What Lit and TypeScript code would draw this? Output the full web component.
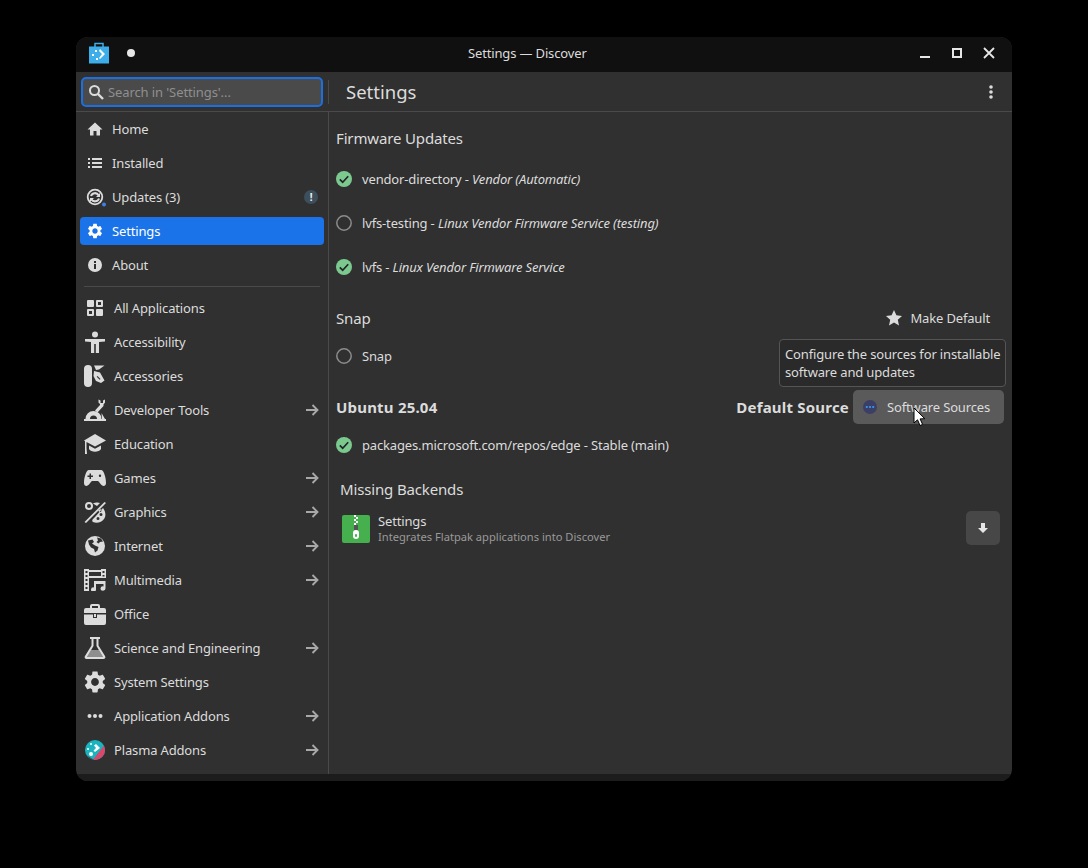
import { LitElement, css, html, svg } from "lit";
import { customElement } from "lit/decorators.js";

const GEAR =
  "M19.14 12.94c.04-.3.06-.61.06-.94 0-.32-.02-.64-.07-.94l2.03-1.58c.18-.14.23-.41.12-.61l-1.92-3.32c-.12-.22-.37-.29-.59-.22l-2.39.96c-.5-.38-1.03-.7-1.62-.94l-.36-2.54c-.04-.24-.24-.41-.48-.41h-3.84c-.24 0-.43.17-.47.41l-.36 2.54c-.59.24-1.13.57-1.62.94l-2.39-.96c-.22-.08-.47 0-.59.22L2.74 8.87c-.12.21-.08.47.12.61l2.03 1.58c-.05.3-.09.63-.09.94s.02.64.07.94l-2.03 1.58c-.18.14-.23.41-.12.61l1.92 3.32c.12.22.37.29.59.22l2.39-.96c.5.38 1.03.7 1.62.94l.36 2.54c.05.24.24.41.48.41h3.84c.24 0 .44-.17.47-.41l.36-2.54c.59-.24 1.13-.56 1.62-.94l2.39.96c.22.08.47 0 .59-.22l1.92-3.32c.12-.22.07-.47-.12-.61l-2.01-1.58zM12 15.6c-1.98 0-3.6-1.62-3.6-3.6s1.62-3.6 3.6-3.6 3.6 1.62 3.6 3.6-1.62 3.6-3.6 3.6z";

const small = {
  home: html`<svg viewBox="0 0 16 16" width="16" height="16"><path fill="currentColor" d="M8 1.500 15.500 8.500H13V14.500H9.500V10h-3v4.500H3V8.500H.5z"/></svg>`,
  list: html`<svg viewBox="0 0 16 16" width="16" height="16"><path fill="currentColor" d="M1 3h2v2H1zM5 3h10v2H5zM1 7h2v2H1zM5 7h10v2H5zM1 11h2v2H1zM5 11h10v2H5z"/></svg>`,
  updates: html`<svg viewBox="0 0 22 22" width="22" height="22" style="margin:0 -3px"><circle cx="11" cy="11" r="7.300" fill="none" stroke="currentColor" stroke-width="1.800"/><path fill="none" stroke="currentColor" stroke-width="2" d="M7 10a4.200 4.200 0 0 1 7.600-.8M15 12.500a4.200 4.200 0 0 1-7.600.8"/><path fill="currentColor" d="M16 7v4h-4zM6 16v-4h4z"/><circle cx="20" cy="18.500" r="2" fill="#3f7fe8"/></svg>`,
  gear: html`<svg viewBox="0 0 24 24" width="18" height="18" style="margin:-1px"><path fill="currentColor" d="${GEAR}"/></svg>`,
  about: html`<svg viewBox="0 0 16 16" width="16" height="16"><path fill="currentColor" fill-rule="evenodd" d="M8 1a7 7 0 1 1 0 14A7 7 0 0 1 8 1zM7 4v2h2V4zM7 7v5h2V7z"/></svg>`,
};

const big = {
  apps: svg`<path fill="currentColor" fill-rule="evenodd" d="M4 3h5a1 1 0 0 1 1 1v5a1 1 0 0 1-1 1H4a1 1 0 0 1-1-1V4a1 1 0 0 1 1-1zM13 3h5a1 1 0 0 1 1 1v5a1 1 0 0 1-1 1h-5a1 1 0 0 1-1-1V4a1 1 0 0 1 1-1zm1 2v3h3V5zM4 12h5a1 1 0 0 1 1 1v5a1 1 0 0 1-1 1H4a1 1 0 0 1-1-1v-5a1 1 0 0 1 1-1zm1 2v3h3v-3zM13 12h5a1 1 0 0 1 1 1v5a1 1 0 0 1-1 1h-5a1 1 0 0 1-1-1v-5a1 1 0 0 1 1-1z"/>`,
  access: svg`<circle cx="11" cy="3.500" r="3" fill="currentColor"/><path fill="currentColor" d="M1 8h20v2.500l-6 .5V22h-3.200v-9h-1.600v9H7V11l-6-.5z"/>`,
  accessories: svg`<rect x="0" y="0" width="8" height="22" rx="4" fill="currentColor"/><path fill="currentColor" d="M10 .5h10.500L15 4.500l-3 .5z"/><path fill="currentColor" fill-rule="evenodd" d="M10 6l6 1.500 4.500 8-3.500 2.500-5-2-2.500-5zM13.500 11l-.8.8 3 3 .8-.8z"/>`,
  dev: svg`<path fill="currentColor" fill-rule="evenodd" d="M0 20h22v2H0zM1.500 20a8 8 0 0 1 16 0h-4.500a3.500 3.500 0 0 0-7 0z"/><path fill="currentColor" d="M17.500 14 21 20h-3zM11 11.500l5-5.500v-1L14.500 3.500V.5l2 1V4h2.500V1.500l2-1V3.500L19.500 5.500v1.500l-6 6.500z"/>`,
  edu: svg`<path fill="currentColor" d="M11 1 22 7.500 11 13.500 2.500 9V15l.5 6H1V8.200L0 7.500zM5 12.500l6 3.300 6-3.300V16c-2 3.500-10 3.500-12 0z"/>`,
  games: svg`<path fill="currentColor" fill-rule="evenodd" d="M5 3h12c3 0 5 8 5 13 0 2-1 3-2.500 3-2 0-4-4-5.500-5H8c-1.500 1-3.500 5-5.500 5C1 19 0 18 0 16 0 11 2 3 5 3zM5.500 6.500V8.500h-2V10h2v2H7v-2h2V8.500H7v-2zM16 7.500a1.200 1.200 0 1 0 0 2.400 1.200 1.200 0 0 0 0-2.400z"/>`,
  graphics: svg`<path fill="currentColor" fill-rule="evenodd" d="M20.500 1 22 2 2 22l-1.500-1zM5 1a4 4 0 1 1 0 8 4 4 0 0 1 0-8zm0 2a2 2 0 1 0 0 4 2 2 0 0 0 0-4zM9 2.500C11 1.500 14 1 16 2L13 5zM19 7c3 4 3 8 1 11s-7 5-11 3c-1-.5-1-2 0-3l2-2zM14 16a1.500 1.500 0 1 0 0 3 1.500 1.500 0 0 0 0-3zM17 12a1.500 1.500 0 1 0 0 3 1.500 1.500 0 0 0 0-3zM16 8a1.500 1.500 0 1 0 0 3 1.500 1.500 0 0 0 0-3z"/>`,
  internet: svg`<circle cx="11" cy="11" r="10" fill="currentColor"/><path fill="#303030" d="M4 5.500 8.500 4.500 10 7 8 8.500l3 2 3.500 1.500-1 3.500-2.500 2-1-3.500-3-1.500-2-3zM13 2.500l4 1 2 3-3 .5-1.500 1.500-2-1.500 1.500-1.500z"/>`,
  multi: svg`<path fill="currentColor" fill-rule="evenodd" d="M0 0h5v22H0zM1.500 2v2h2V2zM1.500 6v2h2V6zM1.500 10v2h2v-2zM1.500 14v2h2v-2zM1.500 18v2h2v-2zM17 0h5v9h-5zM18.500 2v2h2V2zM18.500 6v1.500h2V6z"/><path fill="currentColor" d="M5 1h12v2H5zM5 7h12v2H5zM10 12h11.500v7.500a2.500 2.200 0 1 1-2-2.100V15h-7.500v5.500a2.500 2.200 0 1 1-2-2.100z"/>`,
  office: svg`<path fill="currentColor" fill-rule="evenodd" d="M6 5V3a2 2 0 0 1 2-2h6a2 2 0 0 1 2 2v2h4a2 2 0 0 1 2 2v3H0V7a2 2 0 0 1 2-2zm2 0h6V3H8zM0 11.500h9V15h4v-3.500h9V20a2 2 0 0 1-2 2H2a2 2 0 0 1-2-2zM10 11h2v3h-2z"/>`,
  science: svg`<path fill="currentColor" fill-rule="evenodd" d="M6 0h10v2h-1.500v6.500L21 19c1 1.500 0 3-1.500 3h-17C1 22 0 20.500 1 19L7.500 8.500V2H6zm3.500 2v7L3 20h16L12.500 9V2z"/><path fill="currentColor" opacity=".55" d="M7 13h8l4 7H3z"/>`,
  system: svg`<svg x="-2" y="-2" width="26" height="26" viewBox="0 0 24 24"><path fill="currentColor" d="${GEAR}"/></svg>`,
  addons: svg`<circle cx="5.500" cy="11" r="2" fill="currentColor"/><circle cx="11" cy="11" r="2" fill="currentColor"/><circle cx="16.500" cy="11" r="2" fill="currentColor"/>`,
  plasma: svg`<defs><clipPath id="pc"><circle cx="11" cy="11" r="10"/></clipPath></defs><g clip-path="url(#pc)"><rect width="22" height="22" fill="#1bb3bd"/><path fill="#d9476a" d="M22 4v18H8z"/><path fill="#3c4a52" d="M0 14 8 22H0zM2 16l6 6h4z"/><path fill="#fff" d="M12 5l4 4-5 4-1.500-1.500L12 9l-2-2.500z"/><circle cx="7" cy="5" r="1" fill="#fff"/><circle cx="4" cy="10" r="1" fill="#fff"/><circle cx="7" cy="15" r="2" fill="#fff"/></g>`,
};

const topItems = [
  { label: "Home", icon: small.home },
  { label: "Installed", icon: small.list },
  { label: "Updates (3)", icon: small.updates, badge: true },
  { label: "Settings", icon: small.gear, active: true },
  { label: "About", icon: small.about },
];

const categories = [
  { label: "All Applications", icon: big.apps },
  { label: "Accessibility", icon: big.access },
  { label: "Accessories", icon: big.accessories },
  { label: "Developer Tools", icon: big.dev, more: true },
  { label: "Education", icon: big.edu },
  { label: "Games", icon: big.games, more: true },
  { label: "Graphics", icon: big.graphics, more: true },
  { label: "Internet", icon: big.internet, more: true },
  { label: "Multimedia", icon: big.multi, more: true },
  { label: "Office", icon: big.office },
  { label: "Science and Engineering", icon: big.science, more: true },
  { label: "System Settings", icon: big.system },
  { label: "Application Addons", icon: big.addons, more: true },
  { label: "Plasma Addons", icon: big.plasma, more: true },
];

const check = html`<svg viewBox="0 0 16 16" width="16" height="16"><circle cx="8" cy="8" r="8" fill="#7cc98f"/><path fill="none" stroke="#232629" stroke-width="1.700" d="M3.800 8.300 6.700 11.200 12.200 5.200"/></svg>`;
const radio = html`<svg viewBox="0 0 16 16" width="16" height="16"><circle cx="8" cy="8" r="7.200" fill="none" stroke="#8c8c8c" stroke-width="1.500"/></svg>`;
const arrow = html`<svg class="arrow" viewBox="0 0 14 12" width="14" height="12"><path fill="none" stroke="currentColor" stroke-width="1.900" d="M1 6h11.500M7.500 1l5 5-5 5"/></svg>`;

@customElement("app-root")
export class AppRoot extends LitElement {
  static styles = css`
    :host {
      display: block;
      height: 868px;
      background: #000;
      font-family: "Noto Sans", sans-serif;
      font-size: 13px;
      letter-spacing: -0.15px;
      color: #dcdcdc;
    }
    .page {
      padding: 37px 76px;
    }
    .window {
      position: relative;
      width: 936px;
      height: 744px;
      background: #303030;
      border-radius: 12px;
      overflow: hidden;
      display: flex;
      flex-direction: column;
    }
    .titlebar {
      height: 35px;
      box-sizing: border-box;
      flex: none;
      background: #101010;
      display: grid;
      grid-template-columns: 380px auto 1fr;
      align-items: center;
      padding: 0 17px 3px 12px;
    }
    .title-left {
      display: flex;
      align-items: center;
      gap: 17px;
    }
    .dot {
      width: 8px;
      height: 8px;
      border-radius: 50%;
      background: #e6e6e6;
    }
    .title-right {
      display: flex;
      justify-content: flex-end;
      gap: 20px;
      color: #e6e6e6;
    }
    .toolbar {
      height: 39px;
      flex: none;
      display: flex;
      align-items: center;
      border-bottom: 1px solid #4a4a4a;
      padding: 0 19px 0 5px;
    }
    .search {
      box-sizing: border-box;
      width: 242px;
      height: 30px;
      background: #4a4a4a;
      border: 2px solid #1b6fe0;
      border-radius: 5px;
      display: flex;
      align-items: center;
      gap: 4px;
      padding: 0 5px;
      color: #8f8f8f;
      letter-spacing: -0.1px;
      white-space: nowrap;
    }
    .search svg {
      color: #dcdcdc;
    }
    .tool-sep {
      width: 1px;
      height: 24px;
      background: #4a4a4a;
      margin: 0 17px 0 5px;
    }
    .page-title {
      font-size: 18.5px;
      letter-spacing: 0;
      flex: 1;
    }
    .body {
      flex: 1;
      display: flex;
      min-height: 0;
    }
    .sidebar {
      border-right: 1px solid #4a4a4a;
      padding: 3px 4px 0;
      width: 244px;
      flex: none;
      display: flex;
      flex-direction: column;
      gap: 6px;
    }
    .item {
      height: 28px;
      display: flex;
      align-items: center;
      border-radius: 4px;
      padding: 0 5px 0 4px;
      gap: 8px;
      white-space: nowrap;
    }
    .item.top {
      padding-left: 7px;
      padding-right: 6px;
      gap: 9px;
    }
    .item.active {
      background: #1a73e8;
      color: #fff;
    }
    .icon {
      width: 22px;
      height: 22px;
      flex: none;
    }
    .item .label {
      flex: 1;
    }
    .arrow {
      color: #a8a8a8;
    }
    .badge {
      width: 14px;
      height: 14px;
      border-radius: 50%;
      background: #3d4f5c;
      color: #eee;
      font-size: 10px;
      font-weight: 700;
      line-height: 14px;
      text-align: center;
    }
    .side-sep {
      height: 1px;
      background: #4a4a4a;
      margin: 1px 4px;
    }
    .content {
      position: relative;
      flex: 1;
      padding: 12px 8px 0 7px;
    }
    .heading {
      font-size: 15px;
      line-height: 28px;
      height: 30px;
    }
    .heading.low {
      line-height: 30px;
    }
    .row {
      height: 44px;
      display: flex;
      align-items: center;
      gap: 10px;
    }
    .row.first {
      margin-top: 3px;
    }
    .row.snap {
      margin-top: 2px;
    }
    .row em {
      font-style: italic;
    }
    .snap-head {
      margin-top: 15px;
      height: 28px;
      display: flex;
      align-items: center;
      justify-content: space-between;
      padding-right: 14px;
    }
    .flat {
      display: flex;
      align-items: center;
      gap: 8px;
    }
    .source-head {
      margin-top: 12px;
      height: 34px;
      display: flex;
      align-items: center;
      gap: 4px;
      font-weight: 700;
      font-size: 15px;
      letter-spacing: 0.2px;
    }
    .source-head .name {
      flex: 1;
    }
    .button {
      width: 151px;
      height: 34px;
      box-sizing: border-box;
      background: #5a5a5a;
      border-radius: 5px;
      display: flex;
      align-items: center;
      gap: 10px;
      padding-left: 10px;
      font-weight: 400;
      font-size: 13px;
      letter-spacing: -0.15px;
    }
    .row.tight {
      height: 42px;
    }
    .missing {
      margin-top: 8px;
      padding-left: 4px;
    }
    .backend {
      margin-top: 7px;
      height: 34px;
      display: flex;
      align-items: center;
      gap: 8px;
      padding: 0 4px 0 6px;
    }
    .backend .pack {
      margin-top: 2px;
    }
    .backend .text {
      flex: 1;
      line-height: 16px;
      padding-top: 2px;
    }
    .sub {
      font-size: 11.15px;
      letter-spacing: 0;
      color: #9a9a9a;
    }
    .square {
      width: 34px;
      height: 34px;
      background: #474747;
      border-radius: 5px;
      display: grid;
      place-items: center;
    }
    .tooltip {
      position: absolute;
      left: 450px;
      top: 227px;
      width: 227px;
      height: 48px;
      box-sizing: border-box;
      background: #2a2a2a;
      border: 1px solid #555;
      border-radius: 4px;
      padding: 5px;
      line-height: 18px;
      white-space: nowrap;
    }
    .cursor {
      position: absolute;
      left: 837px;
      top: 370px;
    }
    .footer {
      height: 7px;
      flex: none;
      background: #1c1c1c;
    }
  `;

  render() {
    return html`
      <div class="page">
        <div class="window">
          <div class="titlebar">
            <div class="title-left">
              <svg viewBox="0 0 22 22" width="22" height="22">
                <path fill="none" stroke="#3daee9" stroke-width="1.500" d="M7 5V1.500h8V5" />
                <rect x="1" y="4.500" width="20" height="17" fill="#3daee9" />
                <path fill="#fff" d="M12 7l5 5-5 5-1-1 3-4-3-3zM7 8h2v2H7zM4 12h2v2H4zM8 16h2v2H8z" />
              </svg>
              <span class="dot"></span>
            </div>
            <div>Settings — Discover</div>
            <div class="title-right">
              <svg viewBox="0 0 12 12" width="12" height="12"><path fill="currentColor" d="M1 9h10v2H1z" /></svg>
              <svg viewBox="0 0 12 12" width="12" height="12"><path fill="none" stroke="currentColor" stroke-width="2" d="M2 2h8v8H2z" /></svg>
              <svg viewBox="0 0 12 12" width="12" height="12"><path fill="none" stroke="currentColor" stroke-width="1.800" d="M1 1l10 10M11 1 1 11" /></svg>
            </div>
          </div>
          <div class="toolbar">
            <div class="search">
              <svg viewBox="0 0 16 16" width="16" height="16"><circle cx="6.500" cy="6.500" r="4.500" fill="none" stroke="currentColor" stroke-width="2" /><path stroke="currentColor" stroke-width="2.400" d="M10 10l5 5" /></svg>
              <span>Search in 'Settings'...</span>
            </div>
            <div class="tool-sep"></div>
            <div class="page-title">Settings</div>
            <svg viewBox="0 0 4 16" width="4" height="16"><circle cx="2" cy="3" r="1.800" fill="#dcdcdc" /><circle cx="2" cy="8" r="1.800" fill="#dcdcdc" /><circle cx="2" cy="13" r="1.800" fill="#dcdcdc" /></svg>
          </div>
          <div class="body">
            <div class="sidebar">
              ${topItems.map(
                (i) => html`
                  <div class="item top ${i.active ? "active" : ""}">
                    ${i.icon}
                    <span class="label">${i.label}</span>
                    ${i.badge ? html`<span class="badge">!</span>` : ""}
                  </div>
                `
              )}
              <div class="side-sep"></div>
              ${categories.map(
                (i) => html`
                  <div class="item">
                    <svg class="icon" viewBox="0 0 22 22">${i.icon}</svg>
                    <span class="label">${i.label}</span>
                    ${i.more ? arrow : ""}
                  </div>
                `
              )}
            </div>
            <div class="content">
              <div class="heading">Firmware Updates</div>
              <div class="row first">${check}<span>vendor-directory - <em>Vendor (Automatic)</em></span></div>
              <div class="row">${radio}<span>lvfs-testing - <em>Linux Vendor Firmware Service (testing)</em></span></div>
              <div class="row">${check}<span>lvfs - <em>Linux Vendor Firmware Service</em></span></div>
              <div class="snap-head">
                <span class="heading low">Snap</span>
                <span class="flat">
                  <svg viewBox="0 0 16 16" width="16" height="16"><path fill="#dcdcdc" d="M8 0l2.400 5.300 5.600.6-4.200 3.800 1.200 5.700L8 12.500l-5 2.900 1.200-5.700L0 5.900l5.600-.6z" /></svg>
                  <span>Make Default</span>
                </span>
              </div>
              <div class="row snap">${radio}<span>Snap</span></div>
              <div class="source-head">
                <span class="name">Ubuntu 25.04</span>
                <span>Default Source</span>
                <span class="button">
                  <svg viewBox="0 0 14 14" width="14" height="14"><circle cx="7" cy="7" r="7" fill="#3b3f66" /><circle cx="3.800" cy="7" r="1.100" fill="#3d9bf0" /><circle cx="7" cy="7" r="1.100" fill="#3d9bf0" /><circle cx="10.200" cy="7" r="1.100" fill="#3d9bf0" /></svg>
                  <span>Software Sources</span>
                </span>
              </div>
              <div class="row tight">${check}<span>packages.microsoft.com/repos/edge - Stable (main)</span></div>
              <div class="heading low missing">Missing Backends</div>
              <div class="backend">
                <svg class="pack" viewBox="0 0 28 28" width="28" height="28">
                  <rect width="28" height="28" rx="2" fill="#46b04f" />
                  <path fill="#fff" d="M12 0h2v2h-2zM14 2h2v2h-2zM12 4h2v2h-2zM14 6h2v2h-2zM12 8h2v2h-2z" />
                  <path fill="#555" d="M12 10h4v5h-4z" />
                  <rect x="11" y="15" width="6" height="9" rx="3" fill="#fff" />
                  <rect x="13" y="19" width="2" height="3" rx="1" fill="#46b04f" />
                </svg>
                <div class="text">
                  <div>Settings</div>
                  <div class="sub">Integrates Flatpak applications into Discover</div>
                </div>
                <div class="square">
                  <svg viewBox="0 0 12 12" width="12" height="12"><path fill="#e6e6e6" d="M4 1h4v5h3l-5 5-5-5h3z" /></svg>
                </div>
              </div>
              <div class="tooltip">Configure the sources for installable<br />software and updates</div>
            </div>
          </div>
          <div class="footer"></div>
          <svg class="cursor" viewBox="0 0 13 20" width="13" height="20"><path fill="#fff" stroke="#000" stroke-width="1" d="M1 1v15l3.500-3.200 2.500 5.700 2.600-1.100-2.500-5.500 4.700-.2z" /></svg>
        </div>
      </div>
    `;
  }
}
